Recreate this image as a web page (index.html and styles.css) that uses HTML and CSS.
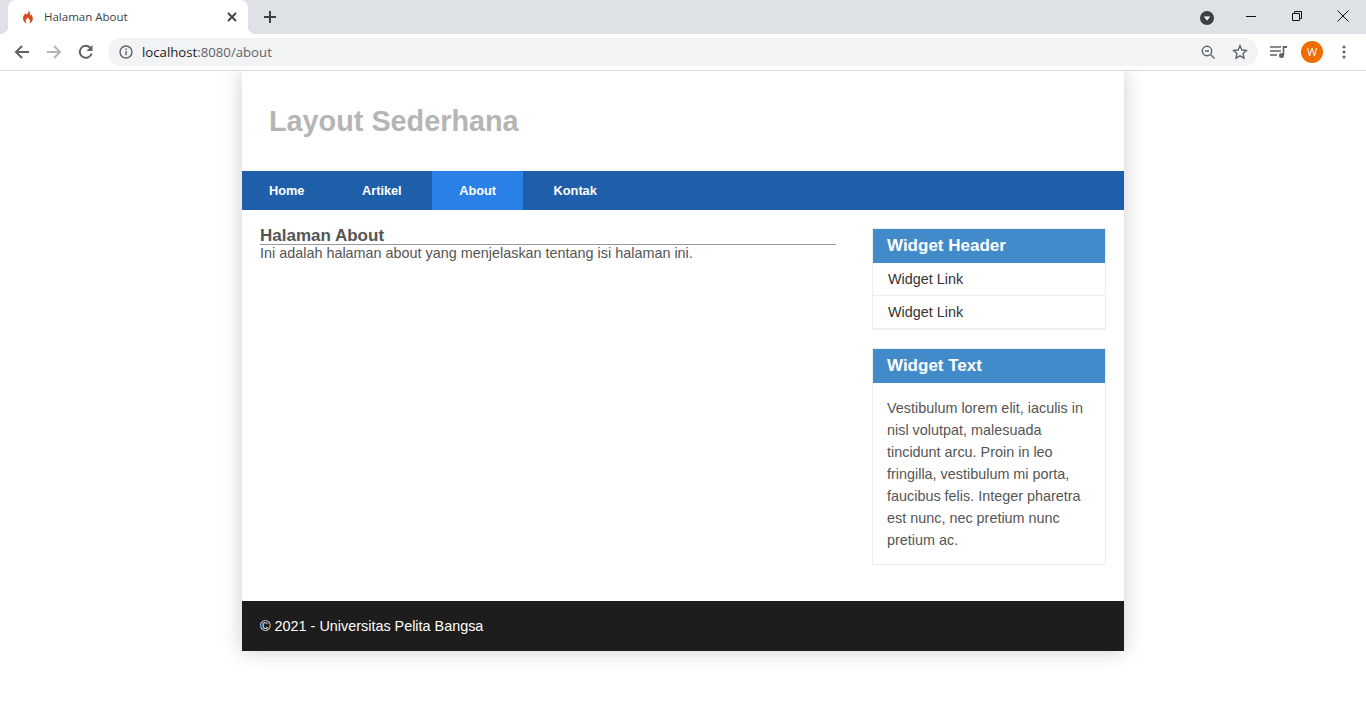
FILE: index.html
```html
<!DOCTYPE html>
<html lang="en">
<head>
    <meta charset="UTF-8">
    <title>Halaman About</title>
    <link rel="stylesheet" href="styles.css">
</head>
<body>
    <div class="browser">
        <div class="tabstrip">
            <div class="tab">
                <svg class="favicon" width="16" height="16" viewBox="0 0 16 16"><path d="M8.600 1.500c.5 2.200-1 3.300-2 4.500-.4-.6-.5-1.200-.4-1.900C4.300 5.400 3 7.300 3 9.400c0 2.600 1.700 4.600 4.100 5.100-1.200-.8-1.700-1.900-1.400-3 .3-1.100 1.300-1.700 1.800-3 1.100.8 2.900 2.400 2.500 4.200-.1.700-.5 1.300-1 1.800 2.300-.6 3.800-2.600 3.800-5 0-1.900-.9-3.200-1.800-4.300-.1.700-.4 1.200-1 1.600C10.400 4.700 10 2.700 8.600 1.500z" fill="#d84a1b"/></svg>
                <span class="tab-title">Halaman About</span>
                <svg class="tab-close" width="10" height="10" viewBox="0 0 10 10"><path d="M1 1l8 8M9 1l-8 8" stroke="#3c4043" stroke-width="1.800" fill="none"/></svg>
            </div>
            <svg class="new-tab" width="14" height="14" viewBox="0 0 14 14"><path d="M7 1v12M1 7h12" stroke="#3c4043" stroke-width="2" fill="none"/></svg>
            <div class="tabstrip-right">
                <svg class="profile-dot" width="14" height="14" viewBox="0 0 14 14"><circle cx="7" cy="7" r="7" fill="#3c4043"/><path d="M3.700 5.500h6.600L7 9.500z" fill="#fff"/></svg>
                <svg class="win-btn" width="46" height="14" viewBox="0 0 46 14"><path d="M18 7.500h10" stroke="#111" fill="none"/></svg>
                <svg class="win-btn" width="46" height="14" viewBox="0 0 46 14"><path d="M18.500 4.500h7v7h-7zM20.500 4.500v-2h7v7h-2" stroke="#111" fill="none"/></svg>
                <svg class="win-btn" width="46" height="14" viewBox="0 0 46 14"><path d="M17.500 1.500l11 11M28.500 1.500l-11 11" stroke="#111" fill="none"/></svg>
            </div>
        </div>
        <div class="toolbar">
            <svg class="tool-icon" width="16" height="16" viewBox="0 0 16 16"><path d="M15 8H2M8 2L2 8l6 6" stroke="#5f6368" stroke-width="2" fill="none"/></svg>
            <svg class="tool-icon" width="16" height="16" viewBox="0 0 16 16"><path d="M1 8h13M8 2l6 6-6 6" stroke="#b4b6b9" stroke-width="2" fill="none"/></svg>
            <svg class="tool-icon" width="16" height="16" viewBox="0 0 16 16"><path d="M13.600 9.500A6 6 0 1 1 12.200 3.700" stroke="#5f6368" stroke-width="2" fill="none"/><path d="M14.500 1v6h-6z" fill="#5f6368"/></svg>
            <div class="omnibox">
                <svg width="14" height="14" viewBox="0 0 14 14"><circle cx="7" cy="7" r="6" stroke="#5f6368" stroke-width="1.400" fill="none"/><path d="M7 6v4.200M7 3.500v1.500" stroke="#5f6368" stroke-width="1.400" fill="none"/></svg>
                <span class="url"><span class="url-host">localhost</span>:8080/about</span>
                <svg class="omni-zoom" width="16" height="16" viewBox="0 0 16 16"><circle cx="7" cy="7" r="4.700" stroke="#5f6368" stroke-width="1.400" fill="none"/><path d="M10.500 10.500l4 4M5 7h4" stroke="#5f6368" stroke-width="1.400" fill="none"/></svg>
                <svg class="omni-star" width="16" height="16" viewBox="0 0 16 16"><path d="M8 1.800l1.900 4.200 4.600.5-3.400 3.100.9 4.500L8 11.800l-4 2.300.9-4.500-3.400-3.100 4.600-.5z" stroke="#5f6368" stroke-width="1.400" fill="none"/></svg>
            </div>
            <svg class="media-icon" width="18" height="14" viewBox="0 0 18 14"><path d="M0 2h11M0 6h11M0 10h7" stroke="#5f6368" stroke-width="1.400" fill="none"/><path d="M13.500 1v9" stroke="#5f6368" stroke-width="1.600" fill="none"/><path d="M13 1h4v2h-4z" fill="#5f6368"/><circle cx="11.500" cy="10.500" r="2.500" fill="#5f6368"/></svg>
            <div class="avatar">W</div>
            <svg class="menu-icon" width="4" height="14" viewBox="0 0 4 14"><circle cx="2" cy="2" r="1.500" fill="#5f6368"/><circle cx="2" cy="7" r="1.500" fill="#5f6368"/><circle cx="2" cy="12" r="1.500" fill="#5f6368"/></svg>
        </div>
    </div>

    <div class="container">
        <header class="header">
            <h1>Layout Sederhana</h1>
        </header>
        <nav class="nav">
            <a href="#">Home</a>
            <a href="#">Artikel</a>
            <a href="#" class="active">About</a>
            <a href="#">Kontak</a>
        </nav>
        <section class="content">
            <div class="main">
                <h2>Halaman About</h2>
                <p>Ini adalah halaman about yang menjelaskan tentang isi halaman ini.</p>
            </div>
            <aside class="sidebar">
                <div class="widget">
                    <h3>Widget Header</h3>
                    <ul>
                        <li><a href="#">Widget Link</a></li>
                        <li><a href="#">Widget Link</a></li>
                    </ul>
                </div>
                <div class="widget">
                    <h3>Widget Text</h3>
                    <p>Vestibulum lorem elit, iaculis in nisl volutpat, malesuada tincidunt arcu. Proin in leo fringilla, vestibulum mi porta, faucibus felis. Integer pharetra est nunc, nec pretium nunc pretium ac.</p>
                </div>
            </aside>
        </section>
        <footer class="footer">&copy; 2021 - Universitas Pelita Bangsa</footer>
    </div>
</body>
</html>
```
FILE: styles.css
```css
* {
    margin: 0;
    padding: 0;
    box-sizing: border-box;
}

body {
    font-family: "Liberation Sans", Arial, sans-serif;
    background: #fff;
    color: #555;
    font-size: 14.4px;
    min-height: 100vh;
    overflow: hidden;
}

.browser {
    position: relative;
    z-index: 1;
}

.browser svg {
    display: block;
    flex: none;
}

.tabstrip {
    height: 34px;
    background: #dee1e6;
    display: flex;
    align-items: center;
    padding-left: 8px;
}

.tab {
    position: relative;
    width: 240px;
    height: 34px;
    background: #fff;
    border-radius: 8px 8px 0 0;
    display: flex;
    align-items: center;
    padding: 0 11px 1px 12px;
    font-family: "Open Sans", sans-serif;
    font-size: 11.5px;
    color: #3c4043;
}

/* curved feet of the active tab */
.tab::before,
.tab::after {
    content: "";
    position: absolute;
    bottom: 0;
    width: 8px;
    height: 8px;
}

.tab::before {
    left: -8px;
    background: radial-gradient(circle at 0 0, #dee1e6 8px, #fff 8.5px);
}

.tab::after {
    right: -8px;
    background: radial-gradient(circle at 100% 0, #dee1e6 8px, #fff 8.5px);
}

.tab-title {
    margin-left: 8px;
    flex: 1;
}

.new-tab {
    margin-left: 15px;
    margin-bottom: 1px;
}

.tabstrip-right {
    margin-left: auto;
    display: flex;
    align-items: center;
    height: 100%;
    padding-bottom: 3px;
}

.profile-dot {
    margin-top: 4px;
    margin-right: 14px;
}

.toolbar {
    height: 37px;
    background: #fff;
    border-bottom: 1px solid #dadce0;
    display: flex;
    align-items: center;
    padding: 0 20px 0 14px;
}

.tool-icon {
    margin-right: 16px;
}

.omnibox {
    width: 1151px;
    height: 28px;
    margin-left: -2px;
    background: #f1f3f4;
    border-radius: 14px;
    display: flex;
    align-items: center;
    padding: 0 10px 0 11px;
}

.url {
    margin-left: 9px;
    flex: 1;
    font-family: "Open Sans", sans-serif;
    font-size: 13.2px;
    color: #5f6368;
}

.url-host {
    color: #202124;
}

.omni-star {
    margin-left: 16px;
}

.media-icon {
    margin-left: 12px;
}

.avatar {
    width: 22px;
    height: 22px;
    margin-left: 13px;
    border-radius: 50%;
    background: #ef6c00;
    color: #fff;
    font-family: "Open Sans", sans-serif;
    font-size: 11px;
    line-height: 22px;
    text-align: center;
}

.menu-icon {
    margin-left: 19px;
}

.container {
    width: 882px;
    margin: 0 auto;
    background: #fff;
    box-shadow: 0 0 20px rgba(0,0,0,0.2);
}

.header {
    height: 100px;
    padding: 32px 27px 0;
}

.header h1 {
    font-size: 28.8px;
    line-height: 36px;
    color: #b5b5b5;
}

.nav {
    height: 39px;
    background: #1f5faa;
    font-size: 12.75px;
    line-height: 39px;
}

.nav a {
    display: inline-block;
    padding: 0 27px;
    color: #fff;
    font-weight: bold;
    text-decoration: none;
}

.nav a.active {
    background: #2b80e8;
}

.content {
    display: flex;
    justify-content: space-between;
    padding: 18px 18px 36px;
}

.main {
    width: 576px;
}

.main h2 {
    font-size: 17px;
    line-height: 16px;
    border-bottom: 1px solid #999;
}

.main p {
    line-height: 16px;
}

.sidebar {
    width: 234px;
}

.widget {
    border: 1px solid #eee;
    margin-bottom: 18px;
}

.widget:last-child {
    margin-bottom: 0;
}

.widget h3 {
    height: 34px;
    padding: 0 14px;
    background: #428bca;
    color: #fff;
    font-size: 17px;
    line-height: 33px;
}

.widget ul {
    list-style: none;
}

.widget li {
    height: 33px;
    padding: 0 15px;
    line-height: 32px;
    border-bottom: 1px solid #eee;
}

.widget li a {
    color: #333;
    text-decoration: none;
}

.widget p {
    padding: 14px 13px 13px 14px;
    line-height: 22px;
}

.footer {
    height: 50px;
    padding: 0 18px;
    background: #1d1d1d;
    color: #fff;
    line-height: 50px;
}
```
